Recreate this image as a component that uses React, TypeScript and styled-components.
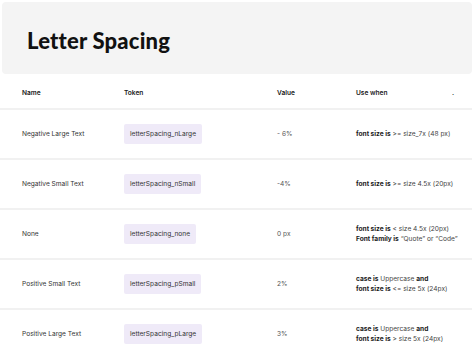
import React from "react";
import styled, { createGlobalStyle } from "styled-components";

const GlobalStyle = createGlobalStyle`
  body {
    margin: 0;
    background: #ffffff;
    font-family: Inter, "Noto Sans", sans-serif;
    color: #222;
  }
`;

const Page = styled.div`
  width: 474px;
  height: 358px;
  overflow: hidden;
  padding-top: 2px;
  box-sizing: border-box;
`;

const Hero = styled.div`
  margin: 0 2px;
  height: 72px;
  background: #f4f4f4;
  border-radius: 4px;
  display: flex;
  align-items: center;
  padding-left: 25px;
  box-sizing: border-box;
`;

const Title = styled.h1`
  margin: 4px 0 0;
  font-family: Lato, "Noto Sans", sans-serif;
  font-weight: 900;
  font-size: 22px;
  letter-spacing: 0.2px;
  color: #111;
`;

const Table = styled.div`
  width: 472px;
`;

const Row = styled.div<{ $head?: boolean }>`
  display: grid;
  grid-template-columns: 102px 153px 79px 96px 1fr;
  align-items: center;
  padding-left: 22px;
  height: ${(p) => (p.$head ? "36px" : "50px")};
  padding-top: ${(p) => (p.$head ? "3px" : "0")};
  box-sizing: border-box;
  border-bottom: 2px solid #f1f1f1;
  font-size: 6.6px;
  color: ${(p) => (p.$head ? "#1a1a1a" : "#333")};
  font-weight: ${(p) => (p.$head ? 600 : 400)};
`;

const Cell = styled.div`
  white-space: nowrap;
`;

const Value = styled.div`
  color: #555;
`;

const Chip = styled.span`
  display: inline-flex;
  align-items: center;
  height: 20px;
  padding: 0 6px;
  background: #efeaf8;
  border-radius: 2px;
  color: #333;
  font-size: 6.6px;
`;

const Rule = styled.div`
  line-height: 10px;
  color: #444;
  white-space: nowrap;
  b {
    font-weight: 700;
    color: #1a1a1a;
  }
`;

const rows = [
  {
    name: "Negative Large Text",
    token: "letterSpacing_nLarge",
    value: "- 6%",
    use: [[["font size is", true], [" >= size_7x (48 px)", false]]],
  },
  {
    name: "Negative Small Text",
    token: "letterSpacing_nSmall",
    value: "-4%",
    use: [[["font size is", true], [" >= size 4.5x (20px)", false]]],
  },
  {
    name: "None",
    token: "letterSpacing_none",
    value: "0 px",
    use: [
      [["font size is", true], [" < size 4.5x  (20px)", false]],
      [["Font family is", true], [" \u201cQuote\u201d or \u201cCode\u201d", false]],
    ],
  },
  {
    name: "Positive Small Text",
    token: "letterSpacing_pSmall",
    value: "2%",
    use: [
      [["case is", true], [" Uppercase ", false], ["and", true]],
      [["font size is", true], [" <= size 5x (24px)", false]],
    ],
  },
  {
    name: "Positive Large Text",
    token: "letterSpacing_pLarge",
    value: "3%",
    use: [
      [["case is", true], [" Uppercase ", false], ["and", true]],
      [["font size is", true], [" > size 5x (24px)", false]],
    ],
  },
] as { name: string; token: string; value: string; use: [string, boolean][][] }[];

const App = () => {
  return (
    <Page>
      <GlobalStyle />
      <Hero>
        <Title>Letter Spacing</Title>
      </Hero>
      <Table>
        <Row $head>
          <Cell>Name</Cell>
          <Cell>Token</Cell>
          <Cell>Value</Cell>
          <Cell>Use when</Cell>
          <Cell>.</Cell>
        </Row>
        {rows.map((r) => (
          <Row key={r.token}>
            <Cell>{r.name}</Cell>
            <Cell>
              <Chip>{r.token}</Chip>
            </Cell>
            <Value>{r.value}</Value>
            <Rule>
              {r.use.map((line, i) => (
                <div key={i}>
                  {line.map(([t, bold], j) => (bold ? <b key={j}>{t}</b> : <span key={j}>{t}</span>))}
                </div>
              ))}
            </Rule>
            <Cell />
          </Row>
        ))}
      </Table>
    </Page>
  );
};

export default App;
